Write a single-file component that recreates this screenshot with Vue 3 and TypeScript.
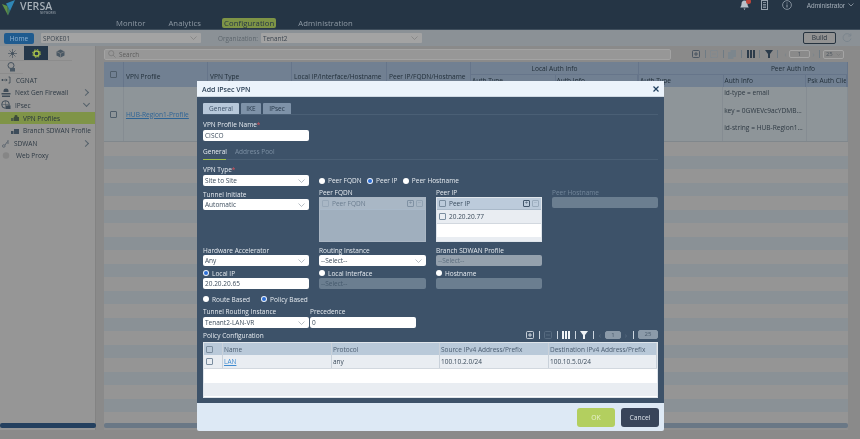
<script setup lang="ts">
const navItems = ['Monitor', 'Analytics', 'Configuration', 'Administration']
const stripes = Array.from({ length: 21 }, (_, i) => i)
const bgCols = [
  { label: 'VPN Type', w: 84 },
  { label: 'Local IP/Interface/Hostname', w: 95 },
  { label: 'Peer IP/FQDN/Hostname', w: 84 },
]
</script>

<template>
  <div class="app">
    <header class="topbar">
      <div class="logo">
        <svg width="17" height="16" viewBox="0 0 17 16">
          <polygon points="2,4 7.500,6 8,15.500" fill="#5f8f46" />
          <polygon points="7.500,6 8,15.500 10,11" fill="#3f7a62" />
          <polygon points="6,3.500 15,0 10,11 7.500,6" fill="#2f86b5" />
        </svg>
        <div class="brand">
          <span class="versa">VERSA</span>
          <span class="networks">NETWORKS</span>
        </div>
      </div>
      <nav class="nav">
        <span v-for="n in navItems" :key="n" class="nav-item" :class="{ active: n === 'Configuration' }">{{ n }}</span>
      </nav>
      <div class="utils">
        <span class="bell">
          <svg width="9" height="10" viewBox="0 0 9 10"><path d="M4.500 0.500c-2 0-3 1.500-3 3.500 0 2-1 2.500-1.200 3.500h8.400c-.2-1-1.200-1.500-1.200-3.500 0-2-1-3.500-3-3.500zM3.500 8.500h2L4.500 10z" fill="#b9c1c9" /></svg>
          <i class="dot"></i>
        </span>
        <svg class="calc" width="7" height="10" viewBox="0 0 7 10"><rect x=".5" y=".5" width="6" height="9" fill="none" stroke="#98a3ae" /><path d="M2 2.500h3M2 4.500h3M2 6h3M2 7.500h3" stroke="#98a3ae" stroke-width=".8" /></svg>
        <svg class="info" width="10" height="10" viewBox="0 0 10 10"><circle cx="5" cy="5" r="4.400" fill="none" stroke="#98a3ae" stroke-width=".8" /><path d="M5 2.500v1M5 4.500v3" stroke="#98a3ae" /></svg>
        <span class="admin">Administrator</span>
        <svg width="6" height="4" viewBox="0 0 6 4"><path d="M.5.500 3 3 5.500.500" fill="none" stroke="#a5afb9" stroke-width=".7" /></svg>
      </div>
    </header>

    <div class="crumbs">
      <span class="home">Home</span>
      <div class="bg-select spoke"><span>SPOKE01</span><svg width="7" height="4" viewBox="0 0 7 4"><path d="M.5.500 3.500 3.500 6.500.500" fill="none" stroke="#7c7c7c" stroke-width=".7" /></svg></div>
      <span class="org">Organization:</span>
      <div class="bg-select tenant"><span>Tenant2</span><svg width="7" height="4" viewBox="0 0 7 4"><path d="M.5.500 3.500 3.500 6.500.500" fill="none" stroke="#7c7c7c" stroke-width=".7" /></svg></div>
      <span class="build">Build</span>
      <svg class="refresh" width="10" height="10" viewBox="0 0 10 10"><path d="M8.500 2.500A4 4 0 1 0 9 5.500M8.800.500v2.500H6.300" fill="none" stroke="#79838b" stroke-width=".8" /></svg>
    </div>

    <div class="main">
      <aside class="sidebar">
        <div class="side-tabs">
          <span class="side-tab"><svg width="9" height="9" viewBox="0 0 9 9"><path d="M4.500 0v9M0 4.500h9M1.500 1.500l6 6M7.500 1.500l-6 6" stroke="#46535f" stroke-width=".7" /><circle cx="4.500" cy="4.500" r="1.500" fill="#46535f" /></svg></span>
          <span class="side-tab on"><svg width="9" height="9" viewBox="0 0 9 9"><circle cx="4.500" cy="4.500" r="2.600" fill="none" stroke="#a8c24b" stroke-width="1.500" /><circle cx="4.500" cy="4.500" r="3.900" fill="none" stroke="#a8c24b" stroke-width="1" stroke-dasharray="1.500 1.560" /></svg></span>
          <span class="side-tab"><svg width="9" height="9" viewBox="0 0 9 9"><polygon points="4.500,.5 8.500,2.500 8.500,6.500 4.500,8.500 .5,6.500 .5,2.500" fill="#4a5864" /><path d="M.5 2.500 4.500 4.500 8.500 2.500M4.500 4.500v4" stroke="#8e8e8e" stroke-width=".6" fill="none" /></svg></span>
        </div>
        <div class="side-tabs second">
          <span class="side-tab"><svg width="9" height="10" viewBox="0 0 9 10"><circle cx="4" cy="3.500" r="3" fill="none" stroke="#46535f" /><rect x="3" y="6" width="5" height="3.500" fill="#4a5864" /></svg></span>
        </div>
        <ul class="menu">
          <li class="menu-row">
            <svg class="mi" width="10" height="8" viewBox="0 0 10 8"><circle cx="1.500" cy="4" r="1" fill="#3a4652" /><path d="M3 4h3M5 2.800 6.200 4 5 5.200M7.500 1h1.500v6H7.500" fill="none" stroke="#3a4652" stroke-width=".8" /></svg>
            <span class="t16">CGNAT</span>
          </li>
          <li class="menu-row">
            <svg class="mi" width="10" height="9" viewBox="0 0 10 9"><path d="M2.500 4V2.500a2.500 2 0 0 1 5 0V4zM.5 5h9v1.500H.5zM1 7.500h8V9H1z" fill="#3f4c58" /></svg>
            <span>Next Gen Firewall</span><b class="chev r"></b>
          </li>
          <li class="menu-row">
            <svg class="mi" width="10" height="10" viewBox="0 0 10 10"><circle cx="4.500" cy="4.500" r="3.800" fill="none" stroke="#3f4c58" /><path d="M1 4.500h7M4.500 1v7" stroke="#3f4c58" stroke-width=".5" /><rect x="5" y="5.500" width="4.500" height="3.500" fill="#3f4c58" /></svg>
            <span>IPsec</span><b class="chev d"></b>
          </li>
          <li class="menu-row sub active">
            <svg class="mi" width="8" height="6" viewBox="0 0 8 6"><path d="M0 3h2.500v3H0z" fill="#4a5a46" /><path d="M3.500 2V1.300a1.500 1.300 0 0 1 3 0V2H8v4H2.800V2z" fill="#3d4c3b" /></svg>
            <span>VPN Profiles</span>
          </li>
          <li class="menu-row sub">
            <svg class="mi" width="8" height="6" viewBox="0 0 8 6"><path d="M0 3h2.500v3H0zM3 1h5v5H3z" fill="#3d4c5a" /></svg>
            <span>Branch SDWAN Profile</span>
          </li>
          <li class="menu-row">
            <svg class="mi" width="8" height="9" viewBox="0 0 8 9"><circle cx="1.800" cy="7" r="1.300" fill="none" stroke="#4c5864" stroke-width=".7" /><path d="M3 6 5.500 2.500M6 1v4" stroke="#4c5864" stroke-width=".8" /></svg>
            <span class="t14">SDWAN</span><b class="chev r"></b>
          </li>
          <li class="menu-row">
            <svg class="mi" width="7" height="7" viewBox="0 0 7 7"><circle cx="3.500" cy="3.500" r="3.200" fill="#868686" /></svg>
            <span class="t16b">Web Proxy</span>
          </li>
        </ul>
        <div class="scroll side-scroll"></div>
      </aside>

      <section class="content">
        <div class="toolbar-row">
          <div class="search">
            <svg width="8" height="8" viewBox="0 0 8 8"><circle cx="3.200" cy="3.200" r="2.600" fill="none" stroke="#767676" stroke-width=".7" /><path d="M5 5l2.500 2.500" stroke="#767676" stroke-width=".7" /></svg>
            <span>Search</span>
          </div>
          <div class="tools bg-tools">
            <svg class="ti" width="8" height="8" viewBox="0 0 8 8"><rect x=".5" y=".5" width="7" height="7" rx="1" fill="none" stroke="#3c4a58" stroke-width=".8" /><path d="M4 2v4M2 4h4" stroke="#3c4a58" stroke-width=".8" /></svg>
            <i class="sep"></i>
            <svg class="ti" width="8" height="8" viewBox="0 0 8 8"><rect x=".5" y=".5" width="7" height="7" rx="1" fill="none" stroke="#7f8990" stroke-width=".8" /><path d="M2 4h4" stroke="#7f8990" stroke-width=".8" /></svg>
            <i class="sep"></i>
            <svg class="ti" width="8" height="9" viewBox="0 0 8 9"><rect x="0" y="2" width="5.500" height="7" fill="#7c868d" /><rect x="2.500" y="0" width="5.500" height="7" fill="#7c868d" /></svg>
            <i class="sep"></i>
            <svg class="ti" width="8" height="8" viewBox="0 0 8 8"><path d="M0 0h2v8H0zM3 0h2v8H3zM6 0h2v8H6z" fill="#2c3b4a" /></svg>
            <i class="sep"></i>
            <svg class="ti" width="8" height="8" viewBox="0 0 8 8"><path d="M0 0h8L5 4v4H3V4z" fill="#2c3b4a" /></svg>
            <i class="sep"></i>
            <span class="caret">‹</span>
            <span class="pager">1</span>
            <span class="caret">›</span>
            <i class="sep narrow"></i>
            <span class="page-size">25<svg width="5" height="3" viewBox="0 0 5 3"><path d="M.5.500 2.500 2.500 4.500.500" fill="none" stroke="#757575" stroke-width=".6" /></svg></span>
          </div>
        </div>

        <div class="bg-table">
          <div class="bg-head">
            <div class="th cb"><i class="check dim"></i></div>
            <div class="th" style="width: 84px">VPN Profile</div>
            <div v-for="c in bgCols" :key="c.label" class="th" :style="{ width: c.w + 'px' }">{{ c.label }}</div>
            <div class="group" style="width: 168px">
              <div class="group-title">Local Auth Info</div>
              <div class="group-cols"><span style="width: 85px">Auth Type</span><span style="width: 83px">Auth Info</span></div>
            </div>
            <div class="group" style="width: 209px">
              <div class="group-title peer-title">Peer Auth Info</div>
              <div class="group-cols"><span style="width: 85px">Auth Type</span><span style="width: 83px">Auth Info</span><span style="width: 41px">Psk Auth Clie</span></div>
            </div>
          </div>
          <div class="bg-row">
            <div class="td cb"><i class="check dim"></i></div>
            <div class="td link-cell" style="width: 84px"><a class="bg-link">HUB-Region1-Profile</a></div>
            <div class="td" style="width: 516px"></div>
            <div class="td auth">
              <span>id-type = email</span>
              <span>key = 0GWEVc9acYDMB...</span>
              <span>id-string = HUB-Region1...</span>
            </div>
            <div class="td" style="width: 41px"></div>
          </div>
          <div class="stripes">
            <div v-for="s in stripes" :key="s" class="stripe" :class="{ dark: s % 2 === 1 }"></div>
          </div>
          <div class="scroll table-scroll"></div>
        </div>
      </section>
    </div>

    <div class="modal">
      <div class="modal-title">
        <span>Add IPsec VPN</span>
        <svg width="6" height="6" viewBox="0 0 6 6"><path d="M.5.500l5 5M5.500.500l-5 5" stroke="#1f3f5e" stroke-width="1.200" /></svg>
      </div>
      <div class="modal-body">
        <div class="tabs">
          <span class="tab on">General</span><span class="tab ike">IKE</span><span class="tab ips">IPsec</span>
        </div>
        <label class="lbl name-lbl">VPN Profile Name<em>*</em></label>
        <div class="inp w106">CISCO</div>
        <div class="subtabs"><span class="sub-on">General</span><span class="sub-off">Address Pool</span></div>

        <div class="grid type-row">
          <div><label class="lbl">VPN Type<em>*</em></label><div class="inp sel">Site to Site<svg width="7" height="4" viewBox="0 0 7 4"><path d="M.5.500 3.500 3.500 6.500.500" fill="none" stroke="#9aa3ac" stroke-width=".7" /></svg></div></div>
          <div class="radios span3">
            <span class="radio"><i class="rd"></i>Peer FQDN</span>
            <span class="radio"><i class="rd on"></i>Peer IP</span>
            <span class="radio"><i class="rd"></i>Peer Hostname</span>
          </div>
        </div>

        <div class="grid peers">
          <div><label class="lbl t">Tunnel Initiate</label><div class="inp sel">Automatic<svg width="7" height="4" viewBox="0 0 7 4"><path d="M.5.500 3.500 3.500 6.500.500" fill="none" stroke="#9aa3ac" stroke-width=".7" /></svg></div></div>
          <div>
            <label class="lbl">Peer FQDN</label>
            <div class="listbox off">
              <div class="lb-head"><i class="check"></i><span>Peer FQDN</span><b class="mini">+</b><b class="mini faint">−</b></div>
            </div>
          </div>
          <div>
            <label class="lbl">Peer IP</label>
            <div class="listbox">
              <div class="lb-head"><i class="check"></i><span>Peer IP</span><b class="mini dark">+</b><b class="mini faint">−</b></div>
              <div class="lb-row"><i class="check"></i><span>20.20.20.77</span></div>
              <div class="lb-foot"></div>
            </div>
          </div>
          <div><label class="lbl muted">Peer Hostname</label><div class="inp dis"></div></div>
        </div>

        <div class="grid hw">
          <div><label class="lbl">Hardware Accelerator</label><div class="inp sel">Any<svg width="7" height="4" viewBox="0 0 7 4"><path d="M.5.500 3.500 3.500 6.500.500" fill="none" stroke="#9aa3ac" stroke-width=".7" /></svg></div></div>
          <div><label class="lbl">Routing Instance</label><div class="inp sel">--Select--<svg width="7" height="4" viewBox="0 0 7 4"><path d="M.5.500 3.500 3.500 6.500.500" fill="none" stroke="#9aa3ac" stroke-width=".7" /></svg></div></div>
          <div><label class="lbl">Branch SDWAN Profile</label><div class="inp dis2">--Select--</div></div>
        </div>

        <div class="grid local">
          <div><span class="radio lbl-radio"><i class="rd on"></i>Local IP</span><div class="inp">20.20.20.65</div></div>
          <div><span class="radio lbl-radio"><i class="rd"></i>Local Interface</span><div class="inp dis3">--Select--</div></div>
          <div><span class="radio lbl-radio"><i class="rd"></i>Hostname</span><div class="inp dis"></div></div>
        </div>

        <div class="radios based">
          <span class="radio"><i class="rd"></i>Route Based</span>
          <span class="radio"><i class="rd on"></i>Policy Based</span>
        </div>

        <div class="routing">
          <div class="rt-a"><label class="lbl">Tunnel Routing Instance</label><div class="inp sel">Tenant2-LAN-VR<svg width="7" height="4" viewBox="0 0 7 4"><path d="M.5.500 3.500 3.500 6.500.500" fill="none" stroke="#9aa3ac" stroke-width=".7" /></svg></div></div>
          <div class="rt-b"><label class="lbl">Precedence</label><div class="inp">0</div></div>
        </div>

        <div class="policy-bar">
          <label class="lbl">Policy Configuration</label>
          <div class="tools pol-tools">
            <svg class="ti" width="8" height="8" viewBox="0 0 8 8"><rect x=".5" y=".5" width="7" height="7" rx="1" fill="none" stroke="#e8edf2" stroke-width=".8" /><path d="M4 2v4M2 4h4" stroke="#e8edf2" stroke-width=".8" /></svg>
            <i class="sep light"></i>
            <svg class="ti" width="8" height="8" viewBox="0 0 8 8"><rect x=".5" y=".5" width="7" height="7" rx="1" fill="none" stroke="#5e7287" stroke-width=".8" /><path d="M2 4h4" stroke="#5e7287" stroke-width=".8" /></svg>
            <i class="sep light"></i>
            <svg class="ti" width="8" height="8" viewBox="0 0 8 8"><path d="M0 0h2v8H0zM3 0h2v8H3zM6 0h2v8H6z" fill="#f0f3f6" /></svg>
            <i class="sep light"></i>
            <svg class="ti" width="8" height="8" viewBox="0 0 8 8"><path d="M0 0h8L5 4v4H3V4z" fill="#f0f3f6" /></svg>
            <i class="sep light"></i>
            <span class="caret pc">‹</span>
            <span class="pager pl">1</span>
            <span class="caret pc">›</span>
            <i class="sep light"></i>
            <span class="page-size pl">25</span>
          </div>
        </div>

        <div class="policy">
          <div class="p-row p-head">
            <div class="p-c c0"><i class="check"></i></div>
            <div class="p-c c1">Name</div>
            <div class="p-c c2">Protocol</div>
            <div class="p-c c3">Source IPv4 Address/Prefix</div>
            <div class="p-c c4">Destination IPv4 Address/Prefix</div>
          </div>
          <div class="p-row p-data">
            <div class="p-c c0"><i class="check"></i></div>
            <div class="p-c c1"><a class="p-link">LAN</a></div>
            <div class="p-c c2">any</div>
            <div class="p-c c3">100.10.2.0/24</div>
            <div class="p-c c4">100.10.5.0/24</div>
          </div>
          <div class="p-white"></div>
          <div class="p-gray"></div>
        </div>
      </div>
      <div class="modal-foot">
        <button class="btn ok">OK</button>
        <button class="btn cancel">Cancel</button>
      </div>
    </div>
  </div>
</template>

<style>
html, body { margin: 0; background: #8a8a8a; }
</style>

<style scoped>
* { box-sizing: border-box; }
.app {
  position: relative;
  width: 860px;
  height: 439px;
  overflow: hidden;
  background: #8a8a8a;
  font-family: "Open Sans", "Noto Sans", sans-serif;
  font-size: 6.600px;
  color: #333d47;
  filter: blur(0.45px);
}
i, b { display: block; font-style: normal; }

/* header */
.topbar { height: 30px; background: #253545; display: flex; position: relative; border-bottom: 1px solid #3f4e5c; }
.logo { width: 116px; display: flex; gap: 3px; }
.brand { display: flex; flex-direction: column; margin-top: 2px; width: 36px; }
.versa { font-size: 10.500px; line-height: 9px; height: 9px; color: #a7b0b8; letter-spacing: .1px; font-weight: 600; }
.networks { font-size: 2.800px; line-height: 3px; margin-top: 1px; color: #8f99a3; align-self: flex-end; letter-spacing: .1px; font-weight: 600; }
.nav { display: flex; align-items: center; height: 10px; margin-top: 18px; gap: 23px; }
.nav-item { font-size: 7.700px; color: #8f9aa5; line-height: 10px; letter-spacing: .1px; }
.nav-item.active { background: #7e9446; color: #253545; border-radius: 2px; padding: 0 2px; margin: 0 -1px 0 -2px; }
.utils { margin-left: auto; display: flex; align-items: center; height: 10px; padding: 0 6px 0 0; }
.bell { position: relative; display: block; width: 9px; height: 10px; margin-right: 12px; }
.dot { position: absolute; right: -2px; top: -1px; width: 5px; height: 5px; border-radius: 50%; background: #c0453a; }
.calc { margin-right: 14px; }
.info { margin-right: 15px; }
.admin { font-size: 6.500px; color: #a5afb9; margin-right: 3px; font-family: "Liberation Sans", sans-serif; }

.crumbs { height: 16px; background: #8b9196; display: flex; align-items: center; padding: 0 8px 0 4px; }
.home { width: 30px; height: 11px; background: #1f5b8f; color: #8fb2d2; border-radius: 2px; text-align: center; line-height: 11px; font-size: 6.600px; }
.bg-select { height: 10px; background: #a3a3a3; display: flex; align-items: center; justify-content: space-between; padding: 0 2px; font-size: 6.400px; color: #3d4650; border-radius: 1px; }
.bg-select svg { margin-right: 2px; }
.spoke { width: 160px; margin-left: 7px; }
.org { margin-left: 17px; width: 43px; color: #5d666d; font-size: 6.400px; }
.tenant { width: 161px; }
.build { margin-left: auto; width: 33px; height: 12px; border: 1px solid #26333f; border-radius: 2px; text-align: center; line-height: 10px; font-size: 6.600px; color: #29343f; background: #939393; }
.refresh { margin-left: 6px; }

.main { display: flex; height: 393px; }
.sidebar { width: 96px; background: #969696; position: relative; display: flex; flex-direction: column; height: 384px; border-right: 1px solid #838383; }
.side-tabs { display: flex; height: 15px; border-bottom: 1px solid #8c8c8c; width: 72px; flex: none; }
.side-tabs.second { width: 23px; height: 13px; }
.side-tab { width: 24px; display: flex; align-items: center; justify-content: center; }
.side-tab.on { background: #24374a; }
.menu { list-style: none; margin: 0; padding: 0; color: #2d3944; font-size: 6.500px; }
.menu-row { height: 12.600px; display: flex; align-items: center; padding-left: 1px; position: relative; }
.mi { display: block; flex: none; width: 10px; margin-right: 4px; }
.menu-row span { white-space: nowrap; }
.menu-row .t16, .menu-row .t16b { margin-left: 1px; }
.menu-row .t14 { margin-left: -1px; }
.menu-row.sub { padding-left: 11px; height: 12.500px; }
.menu-row.sub .mi { width: 8px; margin-right: 4px; }
.menu-row.active { background: #7f9447; color: #25323d; }
.chev { position: absolute; right: 7px; width: 5px; height: 5px; border-right: 1px solid #55616b; border-top: 1px solid #55616b; transform: rotate(45deg); }
.chev.d { transform: rotate(135deg); right: 6px; top: 2px; }
.scroll { height: 5px; border-radius: 2px; position: absolute; bottom: 2px; }
.side-scroll { left: 0; width: 96px; background: #24405f; }
.table-scroll { left: 0; right: 0; background: #6a7886; }

.content { margin-left: 8px; width: 744px; }
.toolbar-row { display: flex; height: 16px; align-items: center; }
.search { width: 567px; height: 11px; background: #979797; border: 1px solid #a3a3a3; border-radius: 2px; display: flex; align-items: center; gap: 3px; padding-left: 3px; font-size: 6.400px; color: #5d5d5d; flex: none; }
.tools { display: flex; align-items: center; flex: none; }
.bg-tools { margin-left: 21px; }
.ti { display: block; flex: none; }
.sep { width: 1px; height: 8px; background: #6f7b84; margin: 0 4.600px; flex: none; }
.sep.narrow { margin: 0 3px 0 3px; }
.sep.light { background: #cdd6df; margin: 0 4.500px; }
.caret { color: #79838a; font-size: 8px; line-height: 8px; width: 5px; text-align: center; flex: none; }
.pager { width: 21px; height: 8px; margin: 0 1px; border: 1px solid #a5a5a5; border-radius: 2px; text-align: center; line-height: 6px; font-size: 6px; color: #4e5760; flex: none; }
.page-size { width: 21px; height: 9px; border: 1px solid #a5a5a5; border-radius: 2px; font-size: 6px; line-height: 7px; padding-left: 2px; display: flex; align-items: center; justify-content: space-between; padding-right: 2px; color: #4e5760; flex: none; }

.bg-table { position: relative; height: 368px; overflow: hidden; background: #8f8f8f; }
.bg-head { display: flex; height: 25px; background: #718092; color: #222f3a; font-size: 6.600px; }
.th { display: flex; align-items: center; padding: 3px 0 0 2px; border-right: 1px solid #66758a; white-space: nowrap; }
.th.cb, .td.cb { width: 20px; justify-content: center; padding: 0; }
.group { display: flex; flex-direction: column; border-right: 1px solid #66758a; }
.group-title { height: 13px; line-height: 14px; text-align: center; border-bottom: 1px solid #66758a; }
.peer-title { padding-left: 100px; }
.group-cols { display: flex; height: 12px; align-items: center; white-space: nowrap; overflow: hidden; }
.group-cols span { padding-left: 1px; border-right: 1px solid #66758a; overflow: hidden; line-height: 12px; height: 12px; }
.check { width: 7px; height: 7px; border: 1px solid #7a8d9f; border-radius: 1px; flex: none; }
.check.dim { border-color: #4f5d6a; }
.bg-row { display: flex; height: 55px; background: #8e9599; border-bottom: 1px solid #80878c; color: #2e3943; font-size: 6.600px; }
.td { display: flex; align-items: center; border-right: 1px solid #858c92; }
.link-cell { padding-left: 2px; }
.bg-link { color: #2e6496; text-decoration: underline; white-space: nowrap; }
.auth { width: 84px; flex-direction: column; align-items: flex-start; padding: 1px 0 0 1px; gap: 8.500px; white-space: nowrap; overflow: hidden; line-height: 9px; }
.stripes { display: flex; flex-direction: column; }
.stripe { height: 13.500px; background: #959595; flex: none; }
.stripe.dark { background: #8a9196; }

/* modal */
.modal { position: absolute; left: 197px; top: 81px; width: 467px; height: 350px; display: flex; flex-direction: column; border-radius: 0 0 2px 2px; overflow: hidden; }
.modal-title { height: 16px; background: #ebf3fb; display: flex; align-items: center; justify-content: space-between; padding: 1px 5px 0 5px; font-size: 7px; font-weight: 600; color: #2e4358; flex: none; border-bottom: 1px solid #cfd9e3; }
.modal-body { height: 306px; background: #3d5269; padding: 6px 6px 0; flex: none; color: #e8edf2; }
.modal-foot { height: 28px; background: #dde9f5; flex: none; display: flex; justify-content: flex-end; align-items: center; gap: 6px; padding: 0 5px 0 0; }

.tabs { display: flex; gap: 2px; height: 12px; border-bottom: 1px solid #4a5f75; }
.tab { width: 36px; text-align: center; font-size: 6.500px; background: #7e92a8; color: #26384a; line-height: 12px; border-radius: 1px 1px 0 0; }
.tab.ike { width: 20px; }
.tab.ips { width: 28px; }
.tab.on { background: #b7c8da; color: #3d5269; }

.lbl { display: block; font-size: 6.500px; line-height: 9px; color: #e6ebf0; white-space: nowrap; }
.lbl em { color: #d8505a; font-style: normal; }
.lbl.muted { color: #73879b; }
.name-lbl { margin-top: 5px; height: 10px; }
.inp { height: 11px; background: #fff; border-radius: 2px; padding: 0 2px; line-height: 11px; font-size: 6.500px; color: #3d4d5d; display: flex; align-items: center; justify-content: space-between; white-space: nowrap; }
.inp svg { margin-right: 2px; flex: none; }
.w106 { width: 106px; }
.inp.dis { background: #6b7e90; }
.inp.dis2 { background: #95a1ad; color: #5d6e7f; }
.inp.dis3 { background: #6b7e90; color: #45596c; }

.subtabs { display: flex; gap: 9px; margin-top: 5px; height: 14px; border-bottom: 1px solid #4a5f75; line-height: 11px; font-size: 6.500px; }
.sub-on { color: #e8edf2; border-bottom: 1px solid #9fbf4a; height: 14px; width: 23px; }
.sub-off { color: #7c8fa3; }

.grid { display: grid; grid-template-columns: 106px 107px 106px 106px; column-gap: 10px; }
.type-row { margin-top: 5px; height: 21px; }
.type-row .lbl { height: 10px; line-height: 10px; }
.span3 { grid-column: span 3; margin-top: 10px; height: 11px; gap: 5.500px; }
.radios { display: flex; align-items: center; }
.radio { display: flex; align-items: center; gap: 3px; font-size: 6.500px; line-height: 9px; color: #e6ebf0; white-space: nowrap; }
.rd { width: 6px; height: 6px; border-radius: 50%; background: #fff; flex: none; }
.rd.on { background: #2d6fd6; box-shadow: 0 0 0 1px #e8f0fb; width: 4px; height: 4px; margin: 1px; }

.peers { margin-top: 2px; height: 54px; }
.peers .lbl { height: 9px; line-height: 9px; }
.peers .lbl.t { margin-top: 2px; }
.listbox { height: 45px; background: #fff; border: 1px solid #dfe5eb; display: flex; flex-direction: column; }
.listbox.off { background: #a0afbe; border-color: #aab6c3; }
.lb-head { height: 12px; background: #bccbdb; display: flex; align-items: center; padding: 0 2px; color: #394c5f; font-size: 6.500px; gap: 3px; flex: none; border-bottom: 1px solid #a9b9c9; }
.listbox.off .lb-head { background: #a9b7c5; color: #6b7d8f; }
.listbox.off .check { border-color: #97a7b7; }
.lb-head span { flex: 1; }
.lb-row { height: 14px; background: #e9edf2; display: flex; align-items: center; gap: 3px; padding: 0 2px; color: #3a4a5a; font-size: 6.500px; flex: none; border-bottom: 1px solid #d2d8df; }
.lb-foot { margin-top: auto; height: 4px; background: #e9edf2; }
.mini { width: 7px; height: 7px; border: 1px solid #7f91a3; border-radius: 1px; font-weight: 400; font-size: 6px; line-height: 5px; text-align: center; color: #6f8193; margin-left: -1px; }
.mini.dark { border-color: #42576c; color: #42576c; }
.mini.faint { opacity: .55; }

.hw { margin-top: 4px; height: 20px; }
.local { margin-top: 2px; height: 21px; }
.lbl-radio { height: 10px; }
.based { margin-top: 5px; height: 10px; gap: 11px; }
.routing { display: flex; margin-top: 3px; height: 21px; }
.rt-a { width: 106px; }
.rt-b { width: 106px; margin-left: 1px; }
.routing .lbl { height: 10px; line-height: 9px; }
.policy-bar { display: flex; justify-content: space-between; align-items: center; height: 11px; margin-top: 2px; }
.pol-tools { margin-top: -2px; }
.pc { color: #5e7287; width: 4px; }
.pl { background: #8b9aa9; border-color: #8b9aa9; color: #4a5b6c; }
.pager.pl { width: 16px; margin: 0 3px; }
.page-size.pl { width: 20px; justify-content: center; padding: 0; }
.policy { margin-top: 1px; height: 56px; background: #fff; border: 1px solid #dfe5eb; display: flex; flex-direction: column; }
.p-row { display: flex; flex: none; }
.p-head { height: 12px; background: #b9c9d9; color: #4a5c70; font-size: 6.500px; }
.p-data { height: 14px; background: #e9edf2; color: #3a4a5a; border-bottom: 1px solid #d2d8df; font-size: 6.500px; }
.p-c { display: flex; align-items: center; padding-left: 1px; border-right: 1px solid #c9d1da; white-space: nowrap; overflow: hidden; }
.c0 { width: 19px; padding-left: 2px; }
.c1 { width: 109px; }
.c2 { width: 108px; }
.c3 { width: 109px; }
.c4 { width: 108px; }
.p-link { color: #3f8bd0; text-decoration: underline; }
.p-white { height: 14px; flex: none; }
.p-gray { height: 13px; background: #e9edf2; flex: none; }

.btn { width: 38px; height: 19px; border: 0; border-radius: 3px; font-family: inherit; font-size: 6.800px; padding: 0; }
.ok { background: #b3cf5f; color: #e8f1cf; }
.cancel { background: #38455a; color: #dde3ea; }
</style>
